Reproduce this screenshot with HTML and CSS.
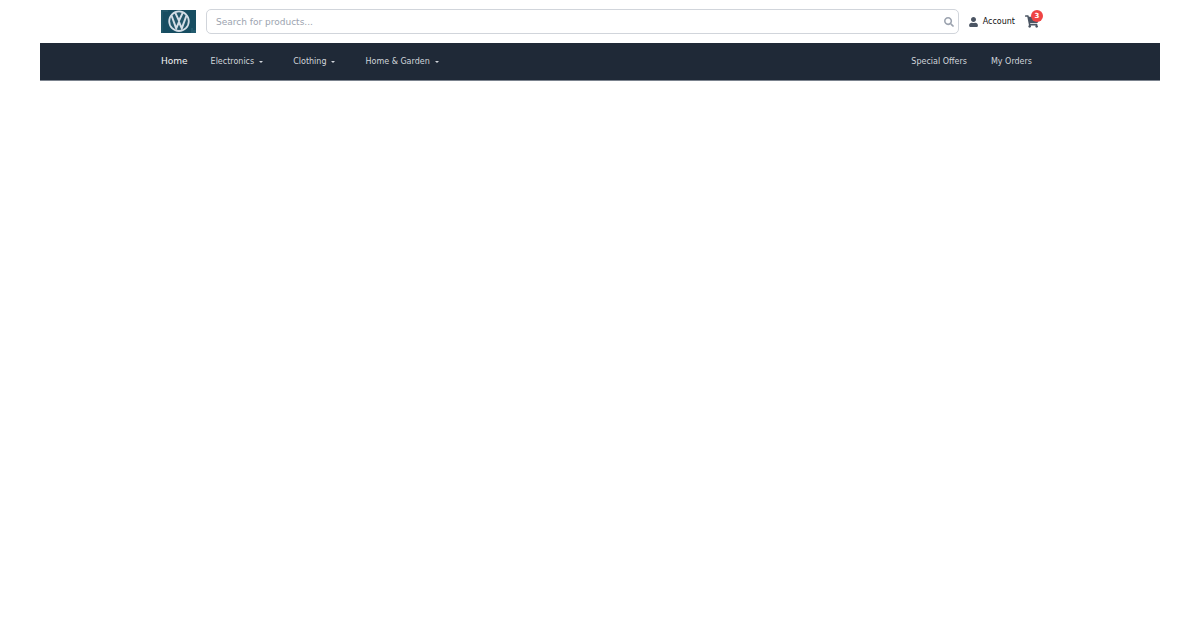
FILE: index.html
```html
<!DOCTYPE html>
<html lang="en">

<head>
    <meta charset="UTF-8">
    <meta name="viewport" content="width=device-width, initial-scale=1.0">
    <title>Shop</title>
    <link rel="stylesheet" href="styles.css">
</head>

<body>
    <header class="site-header">
        <div class="container top-bar">
            <a class="logo" href="#" aria-label="Home page">
                <svg width="35" height="23" viewBox="0 0 35 23">
                    <rect width="35" height="23" fill="#174d61"/>
                    <path d="M0 0h7v2H2v21H0z" fill="#205668"/>
                    <path d="M30 23v-5h2v2h3v3z" fill="#235b6e"/>
                    <circle cx="18" cy="11.2" r="9.8" fill="#23566a" stroke="#d3dde6" stroke-width="1.8"/>
                    <path d="M14.2 2.6 18 10.6l3.8-8M10.500 5.500l4.700 12.800 2.800-6.300 2.800 6.300 4.700-12.800" fill="none" stroke="#d3dde6" stroke-width="2"/>
                </svg>
            </a>

            <form class="search">
                <input class="search-input" type="text" placeholder="Search for products..." aria-label="Search for products">
                <button class="search-button" type="button" aria-label="Search">
                    <svg width="10" height="10" viewBox="0 0 512 512" fill="currentColor">
                        <path d="M505 442.700L405.300 343c-4.500-4.500-10.600-7-17-7H372c27.600-35.300 44-79.700 44-128C416 93.100 322.900 0 208 0S0 93.100 0 208s93.100 208 208 208c48.300 0 92.700-16.400 128-44v16.300c0 6.400 2.500 12.500 7 17l99.700 99.700c9.400 9.400 24.600 9.400 33.900 0l28.300-28.300c9.400-9.400 9.400-24.600.1-34zM208 336c-70.700 0-128-57.200-128-128 0-70.700 57.200-128 128-128 70.700 0 128 57.200 128 128 0 70.700-57.200 128-128 128z"/>
                    </svg>
                </button>
            </form>

            <a class="account" href="#">
                <svg width="9" height="10" viewBox="0 0 448 512" fill="currentColor">
                    <path d="M224 256c70.700 0 128-57.300 128-128S294.700 0 224 0 96 57.300 96 128s57.300 128 128 128zm89.600 32h-16.700c-22.200 10.200-46.900 16-72.900 16s-50.600-5.800-72.900-16h-16.700C60.200 288 0 348.200 0 422.400V464c0 26.500 21.500 48 48 48h352c26.500 0 48-21.500 48-48v-41.600c0-74.200-60.200-134.400-134.400-134.400z"/>
                </svg>
                <span>Account</span>
            </a>

            <a class="cart" href="#" aria-label="Cart">
                <svg width="14" height="13" viewBox="0 0 576 512" fill="currentColor">
                    <path d="M528.100 301.300l47.300-208C578.800 78.300 567.400 64 552 64H159.200l-9.200-44.800C147.800 8 137.900 0 126.500 0H24C10.700 0 0 10.700 0 24v16c0 13.300 10.700 24 24 24h69.900l70.200 343.400C147.300 417.100 136 435.200 136 456c0 30.900 25.100 56 56 56s56-25.100 56-56c0-15.700-6.400-29.800-16.800-40h209.600C430.400 426.200 424 440.300 424 456c0 30.900 25.100 56 56 56s56-25.100 56-56c0-22.200-12.900-41.300-31.600-50.400l5.500-24.300c3.400-15-8-29.300-23.400-29.300H218.100l-6.500-32h293.100c11.200 0 20.900-7.800 23.400-18.700z"/>
                </svg>
                <span class="cart-count">3</span>
            </a>
        </div>

        <nav class="nav-bar">
            <div class="container nav-inner">
                <a class="nav-home" href="#">Home</a>
                <ul class="nav-menu">
                    <li><a class="nav-link has-menu" href="#">Electronics</a></li>
                    <li><a class="nav-link has-menu" href="#">Clothing</a></li>
                    <li><a class="nav-link has-menu" href="#">Home &amp; Garden</a></li>
                </ul>
                <ul class="nav-extra">
                    <li><a class="nav-link" href="#">Special Offers</a></li>
                    <li><a class="nav-link" href="#">My Orders</a></li>
                </ul>
            </div>
        </nav>
    </header>
</body>

</html>
```

FILE: styles.css
```css
* {
    box-sizing: border-box;
}

body {
    margin: 0;
    background-color: #fff;
    font-family: "DejaVu Sans", sans-serif;
    font-size: 8px;
    line-height: 13px;
}

a {
    color: inherit;
    text-decoration: none;
}

svg {
    display: block;
}

.site-header {
    margin: 0 40px;
}

.container {
    max-width: 878px;
    margin: 0 auto;
}

/* top bar */
.top-bar {
    display: flex;
    align-items: center;
    gap: 10px;
    padding: 9px 0;
}

.search {
    flex: 1;
    position: relative;
}

.search-input {
    display: block;
    width: 100%;
    height: 25px;
    padding: 0 24px 0 9px;
    border: 1px solid #d1d5db;
    border-radius: 5px;
    background-color: #fff;
    font-family: inherit;
    font-size: 9px;
    color: #1f2937;
}

.search-input::placeholder {
    color: #9ca3af;
}

.search-button {
    position: absolute;
    top: 0;
    right: 0;
    display: flex;
    align-items: center;
    height: 100%;
    padding: 0 5px;
    border: none;
    background: none;
    color: #9ca3af;
    cursor: pointer;
}

.account {
    display: flex;
    align-items: center;
    gap: 5px;
    color: #111;
}

.account svg,
.cart svg {
    color: #4b5563;
}

.cart {
    position: relative;
}

.cart-count {
    position: absolute;
    top: -5px;
    right: -4px;
    width: 12px;
    height: 12px;
    border-radius: 50%;
    background-color: #ef4444;
    color: #fff;
    font-size: 7px;
    font-weight: bold;
    line-height: 12px;
    text-align: center;
}

/* navigation */
.nav-bar {
    background-color: #1f2937;
    border-bottom: 1px solid #7b838e;
    color: #d1d5db;
}

.nav-inner {
    display: flex;
    align-items: center;
    padding: 12px 0;
}

.nav-home {
    margin-right: 23px;
    color: #f3f4f6;
    font-size: 9px;
}

.nav-menu,
.nav-extra {
    display: flex;
    margin: 0;
    padding: 0;
    list-style: none;
}

.nav-menu {
    gap: 30px;
}

.nav-extra {
    gap: 24px;
    margin-left: auto;
    padding-right: 7px;
}

.nav-link {
    display: flex;
    align-items: center;
}

.has-menu::after {
    content: "";
    margin-left: 5px;
    border: 2px solid transparent;
    border-top-color: currentColor;
    border-bottom: 0;
}

.nav-link:hover {
    color: #fff;
}
```
